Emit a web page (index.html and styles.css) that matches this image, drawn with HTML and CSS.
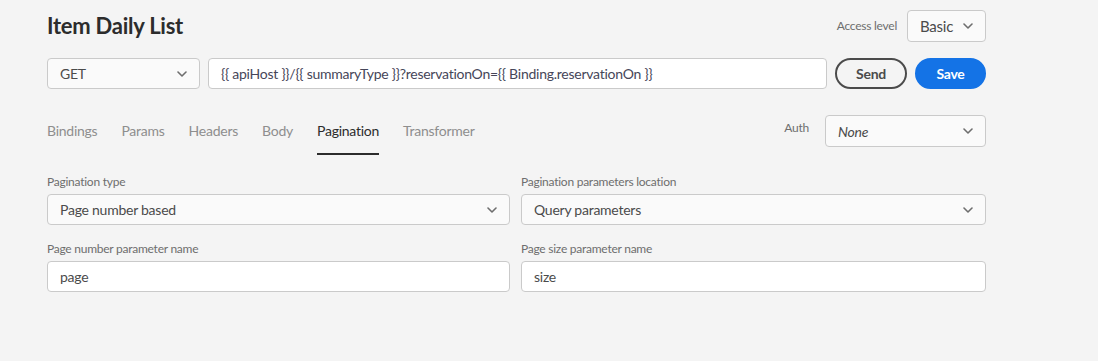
FILE: index.html
```html
<!DOCTYPE html>
<html lang="en">
<head>
<meta charset="utf-8">
<title>Item Daily List</title>
<link rel="stylesheet" href="styles.css">
</head>
<body>
<div class="page">
  <div class="header">
    <h1 class="title">Item Daily List</h1>
    <div class="access">
      <span class="access-label">Access level</span>
      <div class="select select-basic">
        <span class="select-value">Basic</span>
        <svg class="chev" width="10" height="6" viewBox="0 0 10 6"><path d="M1 1 L5 5 L9 1" fill="none" stroke="#6e6e6e" stroke-width="1.6" stroke-linecap="round" stroke-linejoin="round"/></svg>
      </div>
    </div>
  </div>

  <div class="request">
    <div class="select select-method">
      <span class="select-value">GET</span>
      <svg class="chev" width="10" height="6" viewBox="0 0 10 6"><path d="M1 1 L5 5 L9 1" fill="none" stroke="#6e6e6e" stroke-width="1.6" stroke-linecap="round" stroke-linejoin="round"/></svg>
    </div>
    <div class="input url"><span class="url-text">{{ apiHost }}/{{ summaryType }}?reservationOn={{ Binding.reservationOn }}</span></div>
    <button class="btn btn-send">Send</button>
    <button class="btn btn-save">Save</button>
  </div>

  <div class="tabrow">
    <div class="tabs">
      <div class="tab">Bindings</div>
      <div class="tab">Params</div>
      <div class="tab">Headers</div>
      <div class="tab">Body</div>
      <div class="tab active">Pagination</div>
      <div class="tab">Transformer</div>
    </div>
    <div class="auth">
      <span class="auth-label">Auth</span>
      <div class="select select-auth">
        <span class="select-value italic">None</span>
        <svg class="chev" width="10" height="6" viewBox="0 0 10 6"><path d="M1 1 L5 5 L9 1" fill="none" stroke="#6e6e6e" stroke-width="1.6" stroke-linecap="round" stroke-linejoin="round"/></svg>
      </div>
    </div>
  </div>

  <div class="form">
    <div class="field">
      <label class="label">Pagination type</label>
      <div class="select">
        <span class="select-value">Page number based</span>
        <svg class="chev" width="10" height="6" viewBox="0 0 10 6"><path d="M1 1 L5 5 L9 1" fill="none" stroke="#6e6e6e" stroke-width="1.6" stroke-linecap="round" stroke-linejoin="round"/></svg>
      </div>
    </div>
    <div class="field">
      <label class="label">Pagination parameters location</label>
      <div class="select">
        <span class="select-value">Query parameters</span>
        <svg class="chev" width="10" height="6" viewBox="0 0 10 6"><path d="M1 1 L5 5 L9 1" fill="none" stroke="#6e6e6e" stroke-width="1.6" stroke-linecap="round" stroke-linejoin="round"/></svg>
      </div>
    </div>
    <div class="field">
      <label class="label">Page number parameter name</label>
      <div class="input"><span class="input-value">page</span></div>
    </div>
    <div class="field">
      <label class="label">Page size parameter name</label>
      <div class="input"><span class="input-value">size</span></div>
    </div>
  </div>
</div>
</body>
</html>
```

FILE: styles.css
```css
* { box-sizing: border-box; }

html, body {
  margin: 0;
  padding: 0;
  background: #f4f4f4;
}

body {
  font-family: "Lato", "Open Sans", "Liberation Sans", sans-serif;
  color: #4b4b4b;
  letter-spacing: -0.25px;
}

.page {
  width: 939px;
  margin-left: 47px;
  padding-top: 10px;
}

.header {
  display: flex;
  align-items: center;
  justify-content: space-between;
  height: 32px;
}

.title {
  margin: 0;
  font-size: 22px;
  font-weight: 700;
  color: #2c2c2c;
  line-height: 32px;
}

.access {
  display: flex;
  align-items: center;
  gap: 10px;
}

.access-label {
  font-size: 12px;
  color: #6e6e6e;
  margin-top: -2px;
}

.select {
  display: flex;
  align-items: center;
  justify-content: space-between;
  height: 31px;
  padding: 0 12px 0 12px;
  background: #fafafa;
  border: 1px solid #cacaca;
  border-radius: 4px;
  font-size: 14px;
  color: #4b4b4b;
}

.select-basic {
  width: 79px;
  height: 32px;
  font-size: 15px;
}

.select-method {
  width: 153px;
}

.select-auth {
  width: 161px;
  height: 32px;
}

.italic { font-style: italic; }

.chev { flex: none; }

.request {
  display: flex;
  gap: 8px;
  margin-top: 16px;
  height: 31px;
}

.input {
  display: flex;
  align-items: center;
  height: 31px;
  padding: 0 12px;
  background: #ffffff;
  border: 1px solid #cacaca;
  border-radius: 4px;
  font-size: 14px;
  color: #4b4b4b;
}

.url {
  flex: 1;
  color: #464659;
}

.btn {
  height: 31px;
  border-radius: 16px;
  font-family: inherit;
  font-size: 14px;
  font-weight: 700;
  letter-spacing: inherit;
  padding: 0;
  cursor: pointer;
}

.btn-send {
  width: 72px;
  background: transparent;
  border: 2px solid #4b4b4b;
  color: #4b4b4b;
}

.btn-save {
  width: 71px;
  background: #1473e6;
  border: 2px solid #1473e6;
  color: #ffffff;
}

.tabrow {
  display: flex;
  justify-content: space-between;
  align-items: flex-start;
  margin-top: 26px;
  height: 40px;
}

.tabs {
  display: flex;
  gap: 24px;
  height: 40px;
}

.tab {
  height: 40px;
  padding-top: 7px;
  line-height: 18px;
  font-size: 14px;
  color: #8e8e8e;
  border-bottom: 2px solid transparent;
}

.tab.active {
  color: #2c2c2c;
  border-bottom-color: #2c2c2c;
}

.auth {
  display: flex;
  align-items: flex-start;
  gap: 16px;
}

.auth-label {
  font-size: 12px;
  color: #6e6e6e;
  line-height: 16px;
  margin-top: 5px;
}

.form {
  display: grid;
  grid-template-columns: 463px 1fr;
  column-gap: 11px;
  row-gap: 16px;
  margin-top: 19px;
}

.field {
  display: flex;
  flex-direction: column;
  gap: 4px;
}

.label {
  font-size: 12px;
  line-height: 16px;
  color: #6e6e6e;
}
```
